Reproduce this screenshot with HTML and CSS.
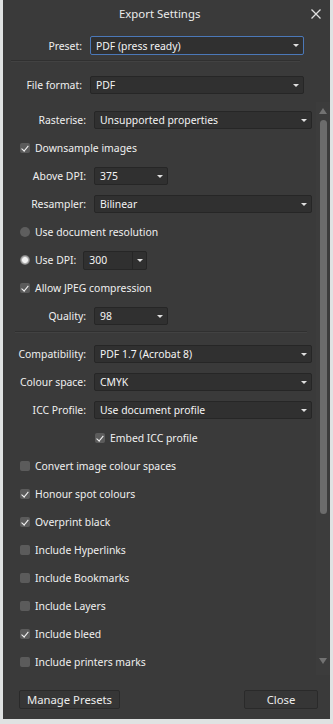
FILE: index.html
```html
<!DOCTYPE html>
<html lang="en">
<head>
    <meta charset="UTF-8">
    <meta name="viewport" content="width=device-width, initial-scale=1.0">
    <title>Export Settings</title>
    <link rel="stylesheet" href="styles.css">
</head>
<body>
    <div class="dialog">
        <div class="titlebar">
            <span class="title">Export Settings</span>
            <button class="close-x" aria-label="Close">
                <svg viewBox="0 0 10 10" width="10" height="10">
                    <path d="M0.5 0.5L9.5 9.5M9.5 0.5L0.5 9.5" />
                </svg>
            </button>
        </div>

        <div class="top">
            <div class="top-row">
                <span class="lbl">Preset:</span>
                <div class="combo focused">PDF (press ready)<i class="arrow"></i></div>
            </div>
            <div class="sep top-sep"></div>
            <div class="top-row">
                <span class="lbl">File format:</span>
                <div class="combo">PDF<i class="arrow"></i></div>
            </div>
        </div>

        <div class="scroll">
            <div class="scroll-content">
                <div class="form-row">
                    <span class="lbl">Rasterise:</span>
                    <div class="combo">Unsupported properties<i class="arrow"></i></div>
                </div>
                <div class="check-row"><span class="box checked"></span>Downsample images</div>
                <div class="form-row">
                    <span class="lbl">Above DPI:</span>
                    <div class="combo small">375<i class="arrow"></i></div>
                </div>
                <div class="form-row">
                    <span class="lbl">Resampler:</span>
                    <div class="combo">Bilinear<i class="arrow"></i></div>
                </div>
                <div class="check-row"><span class="radio"></span>Use document resolution</div>
                <div class="check-row">
                    <span class="radio on"></span>Use DPI:
                    <div class="spin"><span class="spin-val">300</span><span class="spin-btn"><i class="arrow"></i></span></div>
                </div>
                <div class="check-row"><span class="box checked"></span>Allow JPEG compression</div>
                <div class="form-row">
                    <span class="lbl">Quality:</span>
                    <div class="combo small">98<i class="arrow"></i></div>
                </div>

                <div class="sep scroll-sep"></div>

                <div class="form-row">
                    <span class="lbl">Compatibility:</span>
                    <div class="combo">PDF 1.7 (Acrobat 8)<i class="arrow"></i></div>
                </div>
                <div class="form-row">
                    <span class="lbl">Colour space:</span>
                    <div class="combo">CMYK<i class="arrow"></i></div>
                </div>
                <div class="form-row">
                    <span class="lbl">ICC Profile:</span>
                    <div class="combo">Use document profile<i class="arrow"></i></div>
                </div>
                <div class="check-row indent"><span class="box checked"></span>Embed ICC profile</div>
                <div class="check-row"><span class="box"></span>Convert image colour spaces</div>
                <div class="check-row"><span class="box checked"></span>Honour spot colours</div>
                <div class="check-row"><span class="box checked"></span>Overprint black</div>
                <div class="check-row"><span class="box"></span>Include Hyperlinks</div>
                <div class="check-row"><span class="box"></span>Include Bookmarks</div>
                <div class="check-row"><span class="box"></span>Include Layers</div>
                <div class="check-row"><span class="box checked"></span>Include bleed</div>
                <div class="check-row"><span class="box"></span>Include printers marks</div>
            </div>
            <div class="scrollbar">
                <span class="sb-up"></span>
                <span class="sb-thumb"></span>
                <span class="sb-down"></span>
            </div>
        </div>

        <div class="footer">
            <button class="btn manage">Manage Presets</button>
            <button class="btn close">Close</button>
        </div>
    </div>
</body>
</html>
```

FILE: styles.css
```css
body {
    margin: 0;
    padding: 0;
    background: #dfe2e2;
    font-family: "Noto Sans", "Open Sans", sans-serif;
    font-size: 10.4px;
    color: #f0f0f0;
}

.dialog {
    width: 327px;
    height: 719px;
    margin-left: 3px;
    background-color: #3a3a3a;
    display: flex;
    flex-direction: column;
    box-sizing: border-box;
}

/* title bar */
.titlebar {
    height: 27px;
    display: flex;
    align-items: center;
    padding-left: 116px;
    padding-right: 9px;
}

.title {
    font-size: 11.4px;
    color: #ececec;
}

.close-x {
    margin-left: auto;
    background: none;
    border: none;
    padding: 0;
    width: 10px;
    height: 10px;
    display: flex;
}

.close-x path {
    stroke: #e0e0e0;
    stroke-width: 1.3;
    fill: none;
}

/* top section */
.top {
    padding: 9px 0 8px 0;
}

.top-row {
    display: grid;
    grid-template-columns: 79px 214px;
    column-gap: 8px;
    align-items: center;
}

.lbl {
    text-align: right;
    white-space: nowrap;
}

.sep {
    height: 1px;
    background-color: #303030;
    border-bottom: 1px solid #424242;
}

.top-sep {
    margin: 5px 30px 14px 8px;
}

/* combo boxes */
.combo {
    position: relative;
    height: 18px;
    box-sizing: border-box;
    background-color: #303030;
    border: 1px solid #262626;
    border-radius: 2px;
    padding-left: 5px;
    display: flex;
    align-items: center;
    color: #f4f4f4;
    white-space: nowrap;
}

.combo.focused {
    height: 19px;
    border-color: #4b78b8;
}

.combo.small {
    width: 74px;
    box-sizing: border-box;
}

.arrow {
    margin-left: auto;
    margin-right: 4px;
    width: 0;
    height: 0;
    border-left: 3px solid transparent;
    border-right: 3px solid transparent;
    border-top: 3px solid #e0e0e0;
}

/* scroll area */
.scroll {
    height: 573px;
    display: flex;
}

.scroll-content {
    width: 313px;
    padding-top: 4px;
    overflow: hidden;
}

.form-row {
    height: 28px;
    display: grid;
    grid-template-columns: 83px 218px;
    column-gap: 8px;
    align-items: center;
}

.form-row .combo.small {
    width: 74px;
}

.check-row {
    height: 28px;
    display: flex;
    align-items: center;
    padding-left: 17px;
    white-space: nowrap;
}

.check-row.indent {
    padding-left: 92px;
}

.box {
    width: 10px;
    height: 10px;
    border-radius: 2px;
    background-color: #5b5b5b;
    margin-right: 5px;
    flex-shrink: 0;
    display: flex;
    align-items: center;
    justify-content: center;
}

.box.checked::after {
    content: "";
    width: 2.5px;
    height: 6px;
    border-right: 1.6px solid #f4f4f4;
    border-bottom: 1.6px solid #f4f4f4;
    transform: translate(0, -1px) rotate(40deg);
}

.radio {
    width: 10px;
    height: 10px;
    border-radius: 50%;
    background-color: #5e5e5e;
    margin-right: 5px;
    flex-shrink: 0;
}

.radio.on {
    background: radial-gradient(circle, #f2f2f2 0 2.5px, #b8b8b8 3.3px, #6a6a6a 5px);
}

.spin {
    margin-left: 7px;
    width: 64px;
    height: 19px;
    box-sizing: border-box;
    background-color: #303030;
    border: 1px solid #262626;
    border-radius: 2px;
    display: flex;
    align-items: center;
}

.spin-val {
    flex: 1;
    padding-left: 5px;
    color: #f4f4f4;
}

.spin-btn {
    width: 13px;
    height: 100%;
    border-left: 1px solid #262626;
    display: flex;
    align-items: center;
    justify-content: center;
}

.spin-btn .arrow {
    margin: 0;
}

.scroll-sep {
    margin: 1px 9px 7px 12px;
}

/* scrollbar */
.scrollbar {
    width: 14px;
    display: flex;
    flex-direction: column;
    align-items: center;
    padding-top: 6px;
    padding-bottom: 11px;
    box-sizing: border-box;
    background-color: #3c3c3c;
}

.sb-up,
.sb-down {
    width: 0;
    height: 0;
    border-left: 4px solid transparent;
    border-right: 4px solid transparent;
}

.sb-up {
    border-bottom: 6px solid #727272;
}

.sb-down {
    margin-top: auto;
    border-top: 6px solid #727272;
}

.sb-thumb {
    margin-top: 6px;
    width: 7px;
    height: 394px;
    border-radius: 4px;
    background-color: #6c6c6c;
}

/* footer */
.footer {
    display: flex;
    justify-content: space-between;
    padding: 15px 12px 0 16px;
}

.btn {
    height: 19px;
    box-sizing: border-box;
    background-color: #363636;
    border: 1px solid #2a2a2a;
    border-radius: 2px;
    color: #ececec;
    font-family: inherit;
    font-size: 11.3px;
    padding: 0;
}

.btn.manage {
    width: 101px;
}

.btn.close {
    width: 74px;
}
```
